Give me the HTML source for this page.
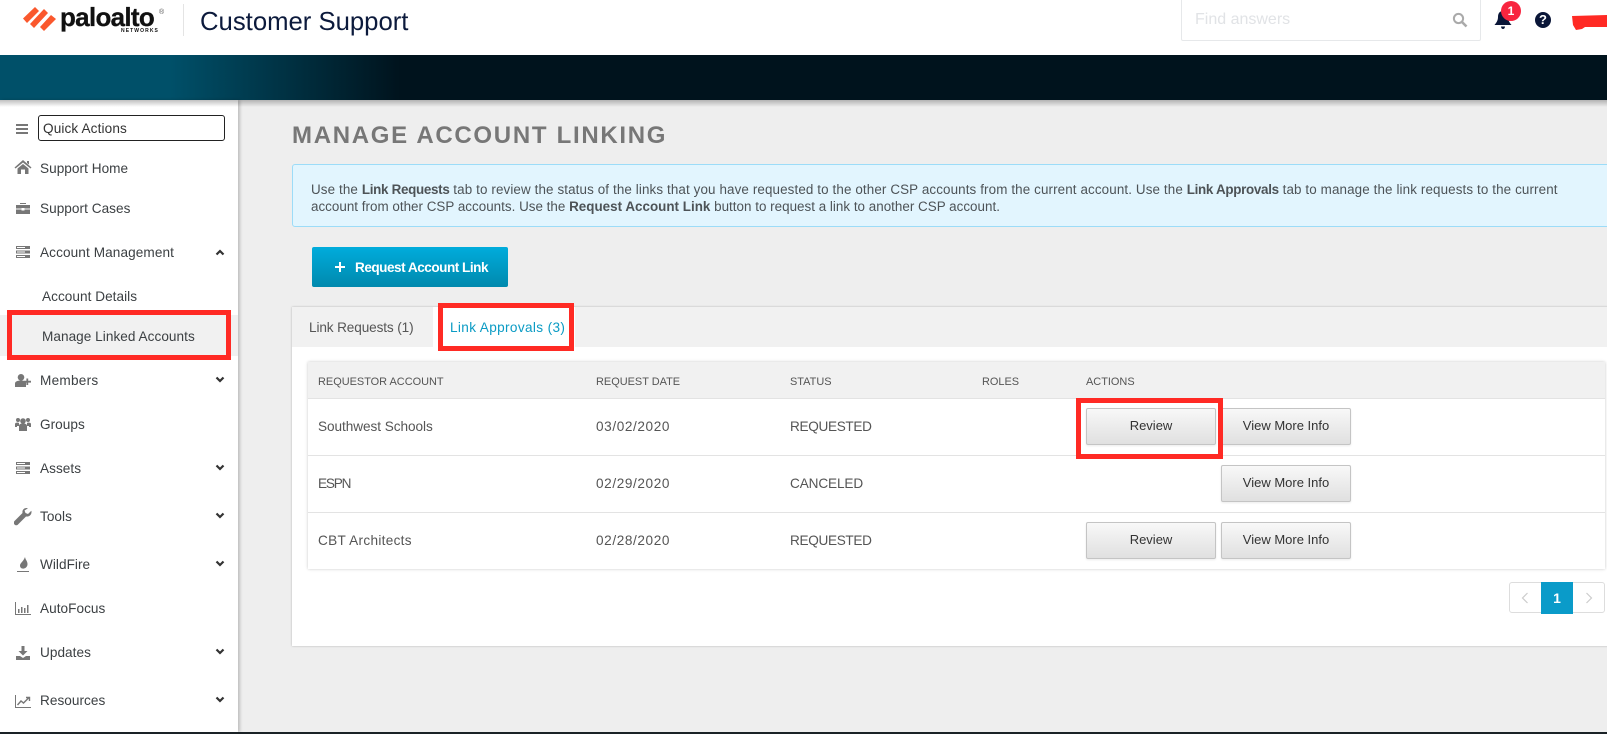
<!DOCTYPE html>
<html><head><meta charset="utf-8"><style>
html,body{margin:0;padding:0;width:1607px;height:734px;overflow:hidden;background:#eee;font-family:"Liberation Sans",Arial,sans-serif;color:#333}
.a{position:absolute}
.t{position:absolute;white-space:nowrap;line-height:18px;font-size:13.6px}
.nav{color:#3c4043;left:40px;letter-spacing:.04px}
.ico{position:absolute;left:15px;fill:#777}
.chev{position:absolute;left:214px;fill:none;stroke:#333;stroke-width:2.2}
.btn{position:absolute;box-sizing:border-box;height:37px;width:130px;border:1px solid #c4c4c4;border-radius:2px;background:linear-gradient(#f8f8f8,#e0e0e0);text-align:center;line-height:33px;font-size:13px;color:#333;box-shadow:0 1px 2px rgba(0,0,0,.08)}
.th{position:absolute;top:373.5px;font-size:10.95px;line-height:16px;color:#555;white-space:nowrap}
.td{position:absolute;font-size:13.6px;line-height:18px;color:#555;white-space:nowrap}
.red{position:absolute;box-sizing:border-box;border:5px solid #ff2a24}
.l1 b{letter-spacing:-.3px}
</style></head><body>
<div class="a" style="left:0;top:0;width:1607px;height:55px;background:#fff"></div>
<svg class="a" style="left:20px;top:4px" width="40" height="30" viewBox="20 4 40 30"><g fill="#fa582d"><polygon points="23,18.500 35,7 39,11 27,23"/><polygon points="30,24 44,9 48,13 34,28"/><polygon points="40,27 51,15 56,19 44,31"/></g></svg>
<div class="t" style="left:60px;top:3px;font-size:26px;font-weight:700;color:#111;letter-spacing:-.7px;line-height:28px;-webkit-text-stroke:.3px #111">paloalto</div>
<div class="t" style="left:159px;top:9px;font-size:7px;line-height:7px;color:#555">®</div>
<div class="t" style="left:121px;top:28px;font-size:5px;font-weight:700;line-height:6px;color:#111;letter-spacing:1.1px">NETWORKS</div>
<div class="a" style="left:183px;top:4px;width:1px;height:32px;background:#e4e4e4"></div>
<div class="t" style="left:200px;top:6px;font-size:25.7px;line-height:32px;color:#0c1a3c">Customer Support</div>

<div class="a" style="left:1181px;top:-2px;width:300px;height:43px;box-sizing:border-box;border:1px solid #e6e8ea;border-radius:2px;background:#fff"></div>
<div class="t" style="left:1195px;top:11px;font-size:16px;color:#e1e3e6">Find answers</div>
<svg class="a" style="left:1452px;top:12px" width="16" height="16" viewBox="0 0 16 16"><circle cx="6.500" cy="6.500" r="4.600" fill="none" stroke="#aaa" stroke-width="2"/><path d="M10 10l4.500 4.500" stroke="#aaa" stroke-width="2.600"/></svg>
<svg class="a" style="left:1494px;top:10px" width="18" height="20" viewBox="0 0 18 20"><path d="M9 1c3.500 0 5 2.500 5 6 0 4 2 6 3.500 8H.5C2 13 4 11 4 7c0-3.500 1.500-6 5-6zM7 16.500h4c0 1.500-1 2.500-2 2.500s-2-1-2-2.500z" fill="#0a1638"/></svg>
<div class="a" style="left:1501px;top:1px;width:20px;height:20px;border-radius:50%;background:#f8253f;color:#fff;text-align:center;font-size:12px;font-weight:700;line-height:20px">1</div>
<div class="a" style="left:1535px;top:12px;width:16px;height:16px;border-radius:50%;background:#0a1638;color:#fff;text-align:center;font-size:13px;font-weight:700;line-height:16px">?</div>
<svg class="a" style="left:1570px;top:12px" width="37" height="18" viewBox="0 0 37 18"><path d="M2 4l35-1v12H15l-3 2-6 1-3-5z" fill="#ff2a24"/></svg>

<div class="a" style="left:0;top:55px;width:1607px;height:45px;background:linear-gradient(90deg,#005069 0,#005069 170px,#00131d 400px,#00131d 100%)"></div>
<div class="a" style="left:0;top:100px;width:1607px;height:7px;background:linear-gradient(rgba(0,0,0,.25),rgba(0,0,0,0))"></div>

<div class="a" style="left:0;top:100px;width:238px;height:632px;background:#fff;box-shadow:2px 0 3px rgba(0,0,0,.2)"></div>
<div class="a" style="left:0;top:100px;width:238px;height:7px;background:linear-gradient(rgba(0,0,0,.25),rgba(0,0,0,0))"></div>
<div class="a" style="left:0;top:732px;width:1607px;height:2px;background:#1a2226"></div>

<svg class="ico" style="top:124px;left:16px" width="13" height="10" viewBox="0 0 13 10"><path d="M0 0h12v2H0zM0 4h12v2H0zM0 8h12v2H0z"/></svg>
<div class="a" style="left:38px;top:115px;width:187px;height:26px;box-sizing:border-box;border:1px solid #222;border-radius:3px;background:#fff"></div>
<div class="t nav" style="left:43px;top:120px;color:#333;letter-spacing:.12px">Quick Actions</div>

<svg class="ico" style="top:160px;left:14px" width="18" height="14" viewBox="0 0 17 14"><path d="M8.500 0L17 7.500 16 8.500 8.500 2.500 1 8.500 0 7.500zM12.500 1h2v3.500l-2-1.500zM3 8.500L8.500 4 14 8.500V14h-3.500V9.500h-4V14H3z"/></svg>
<div class="t nav" style="top:160px">Support Home</div>
<svg class="ico" style="top:202px;left:16px" width="14" height="13" viewBox="0 0 14 13"><path d="M4 2V1h6v1h-1V2H5zM0 3h14v3.500H8.500V6h-3v.5H0zM0 7.500h5.500V8.500h3V7.500H14V12H0z"/></svg>
<div class="t nav" style="top:200px">Support Cases</div>
<svg class="ico" style="top:246px;left:16px" width="14" height="12" viewBox="0 0 14 12"><path d="M0 0h14v3H0zM0 4.500h14v3H0zM0 9h14v3H0zM1 1v1h8V1zM1 5.500v1h8v-1zM1 10v1h8v-1z" fill-rule="evenodd"/></svg>
<div class="t nav" style="top:244px;letter-spacing:.1px">Account Management</div>
<svg class="chev" style="top:249px" width="12" height="7" viewBox="0 0 12 7"><path d="M2.500 5.500L6 2l3.500 3.500"/></svg>
<div class="t nav" style="left:42px;top:288px">Account Details</div>
<div class="a" style="left:0;top:315px;width:238px;height:41px;background:#f1f1f1"></div>
<div class="t nav" style="left:42px;top:328px">Manage Linked Accounts</div>
<div class="red" style="left:7px;top:310px;width:224px;height:50px"></div>

<svg class="ico" style="top:374px" width="17" height="13" viewBox="0 0 17 13"><circle cx="6" cy="3.300" r="3.300"/><path d="M0 13V9.500C0 7.500 2.500 6.500 6 6.500S11 7.500 11 9V13z"/><path d="M12.300 4.500v6.500M9 7.700h7" stroke="#777" stroke-width="1.800"/></svg>
<div class="t nav" style="top:372px;letter-spacing:.25px">Members</div>
<svg class="chev" style="top:376px" width="12" height="7" viewBox="0 0 12 7"><path d="M2.500 1.500L6 5l3.500-3.500"/></svg>
<svg class="ico" style="top:417px;left:15px" width="16" height="14" viewBox="0 0 16 14"><circle cx="8" cy="4" r="2.800"/><circle cx="3" cy="3" r="2"/><circle cx="13" cy="3" r="2"/><path d="M0 10V7c0-1 1-1.500 3-1.500L4 6v3H2v1zM16 10V7c0-1-1-1.500-3-1.500L12 6v3h2v1zM4 14V9c0-1.500 1-2.500 4-2.500s4 1 4 2.500v5z"/></svg>
<div class="t nav" style="top:416px">Groups</div>
<svg class="ico" style="top:462px;left:16px" width="14" height="12" viewBox="0 0 14 12"><path d="M0 0h14v3H0zM0 4.500h14v3H0zM0 9h14v3H0zM1 1v1h8V1zM1 5.500v1h8v-1zM1 10v1h8v-1z" fill-rule="evenodd"/></svg>
<div class="t nav" style="top:460px">Assets</div>
<svg class="chev" style="top:464px" width="12" height="7" viewBox="0 0 12 7"><path d="M2.500 1.500L6 5l3.500-3.500"/></svg>
<svg class="ico" style="top:508px;left:14px" width="18" height="18" viewBox="0 0 18 18"><path d="M12.500 0c-2.600 0-4.500 2-4 5L.5 13c-1 1-1 2.500 0 3.500s2.500 1 3.500 0L12 8.500c3 .5 5.500-1.500 5.500-4.500 0-.5 0-1-.2-1.300L14 6l-2.500-1-1-2.500L14 .3c-.5-.2-1-.3-1.500-.3z"/></svg>
<div class="t nav" style="top:508px">Tools</div>
<svg class="chev" style="top:512px" width="12" height="7" viewBox="0 0 12 7"><path d="M2.500 1.500L6 5l3.500-3.500"/></svg>
<svg class="ico" style="top:557px;left:17px" width="13" height="16" viewBox="0 0 13 16"><path d="M8 0c.5 3 2.500 4 2.500 7 0 2.500-1.500 4-3.500 4.500C4.500 12 3 10.500 3 8.500 3 6 6.500 4.500 8 0zM0 14h12v1H0z"/></svg>
<div class="t nav" style="top:556px">WildFire</div>
<svg class="chev" style="top:560px" width="12" height="7" viewBox="0 0 12 7"><path d="M2.500 1.500L6 5l3.500-3.500"/></svg>
<svg class="ico" style="top:602px" width="16" height="13" viewBox="0 0 16 13"><path d="M0 0h1v12h15v1H0zM3 7h1.500v4H3zM6 5h1.500v6H6zM9 6h1.500v5H9zM12 3h1.500v8H12z"/></svg>
<div class="t nav" style="top:600px">AutoFocus</div>
<svg class="ico" style="top:646px;left:16px" width="14" height="14" viewBox="0 0 14 14"><path d="M5.500 0h3v5h3L7 9.500 2.500 5h3zM0 10h4l3 2 3-2h4v4H0z"/></svg>
<div class="t nav" style="top:644px">Updates</div>
<svg class="chev" style="top:648px" width="12" height="7" viewBox="0 0 12 7"><path d="M2.500 1.500L6 5l3.500-3.500"/></svg>
<svg class="ico" style="top:695px" width="16" height="13" viewBox="0 0 16 13"><path d="M0 0h1v12h15v1H0z"/><path d="M2.500 10L6 6l2.500 2 5-5M11 2.500h3.500V6" fill="none" stroke="#777" stroke-width="1.400"/></svg>
<div class="t nav" style="top:692px">Resources</div>
<svg class="chev" style="top:696px" width="12" height="7" viewBox="0 0 12 7"><path d="M2.500 1.500L6 5l3.500-3.500"/></svg>

<div class="t" style="left:292px;top:122px;font-size:24px;font-weight:700;line-height:28px;color:#777;letter-spacing:1.7px">MANAGE ACCOUNT LINKING</div>
<div class="a" style="left:292px;top:164px;width:1330px;height:63px;box-sizing:border-box;border:1px solid #9cdcf8;border-radius:3px;background:#e2f5fe"></div>
<div class="t l1" style="left:311px;top:181px;font-size:13.4px;color:#4d5357;letter-spacing:.12px">Use the <b>Link Requests</b> tab to review the status of the links that you have requested to the other CSP accounts from the current account. Use the <b>Link Approvals</b> tab to manage the link requests to the current</div>
<div class="t" style="left:311px;top:198px;font-size:13.4px;color:#4d5357;letter-spacing:.02px">account from other CSP accounts. Use the <b>Request Account Link</b> button to request a link to another CSP account.</div>

<div class="a" style="left:312px;top:247px;width:196px;height:40px;border-radius:2px;background:linear-gradient(#00acdc,#0089ad)"></div>
<svg class="a" style="left:334px;top:260px" width="12" height="14" viewBox="0 0 12 14"><path d="M6 2v10M1 7h10" stroke="#fff" stroke-width="2"/></svg>
<div class="t" style="left:355px;top:259px;font-size:13.6px;font-weight:700;color:#fff;letter-spacing:-.5px">Request Account Link</div>

<div class="a" style="left:292px;top:307px;width:1330px;height:339px;background:#fff;box-shadow:0 0 2px rgba(0,0,0,.25)"></div>
<div class="a" style="left:292px;top:307px;width:1315px;height:40px;background:#f1f1f1"></div>
<div class="a" style="left:433px;top:307px;width:142px;height:40px;background:#fff"></div>
<div class="t" style="left:309px;top:319px;color:#555;letter-spacing:-.12px">Link Requests (1)</div>
<div class="t" style="left:450px;top:319px;color:#0a9bc4;letter-spacing:.36px">Link Approvals (3)</div>
<div class="red" style="left:438px;top:303px;width:136px;height:48px"></div>

<div class="a" style="left:308px;top:362px;width:1297px;height:207px;background:#fff;box-shadow:0 0 3px rgba(0,0,0,.22)"></div>
<div class="a" style="left:308px;top:362px;width:1297px;height:36px;background:#f1f1f1;border-bottom:1px solid #e3e3e3"></div>
<div class="a" style="left:308px;top:455px;width:1297px;height:1px;background:#e3e3e3"></div>
<div class="a" style="left:308px;top:512px;width:1297px;height:1px;background:#e3e3e3"></div>
<div class="th" style="left:318px">REQUESTOR ACCOUNT</div>
<div class="th" style="left:596px">REQUEST DATE</div>
<div class="th" style="left:790px">STATUS</div>
<div class="th" style="left:982px">ROLES</div>
<div class="th" style="left:1086px">ACTIONS</div>
<div class="td" style="left:318px;top:418px;letter-spacing:-.05px">Southwest Schools</div>
<div class="td" style="left:596px;top:418px;letter-spacing:.6px">03/02/2020</div>
<div class="td" style="left:790px;top:418px;letter-spacing:-.33px">REQUESTED</div>
<div class="td" style="left:318px;top:475px;letter-spacing:-1.2px">ESPN</div>
<div class="td" style="left:596px;top:475px;letter-spacing:.6px">02/29/2020</div>
<div class="td" style="left:790px;top:475px;letter-spacing:-.12px">CANCELED</div>
<div class="td" style="left:318px;top:532px;letter-spacing:.3px">CBT Architects</div>
<div class="td" style="left:596px;top:532px;letter-spacing:.6px">02/28/2020</div>
<div class="td" style="left:790px;top:532px;letter-spacing:-.33px">REQUESTED</div>
<div class="btn" style="left:1086px;top:408px">Review</div>
<div class="btn" style="left:1221px;top:408px">View More Info</div>
<div class="btn" style="left:1221px;top:465px">View More Info</div>
<div class="btn" style="left:1086px;top:522px">Review</div>
<div class="btn" style="left:1221px;top:522px">View More Info</div>
<div class="red" style="left:1076px;top:398px;width:147px;height:61px"></div>

<div class="a" style="left:1509px;top:582px;width:96px;height:31px;box-sizing:border-box;border:1px solid #ddd;border-radius:3px;background:#fff"></div>
<div class="a" style="left:1541px;top:582px;width:32px;height:32px;background:#0a9bc9;color:#fff;text-align:center;font-size:14px;font-weight:700;line-height:32px">1</div>
<svg class="a" style="left:1520px;top:592px" width="10" height="12" viewBox="0 0 10 12"><path d="M7.500 1L2.500 6l5 5" fill="none" stroke="#ccc" stroke-width="1.200"/></svg>
<svg class="a" style="left:1584px;top:592px" width="10" height="12" viewBox="0 0 10 12"><path d="M2.500 1l5 5-5 5" fill="none" stroke="#ccc" stroke-width="1.200"/></svg>
</body></html>
